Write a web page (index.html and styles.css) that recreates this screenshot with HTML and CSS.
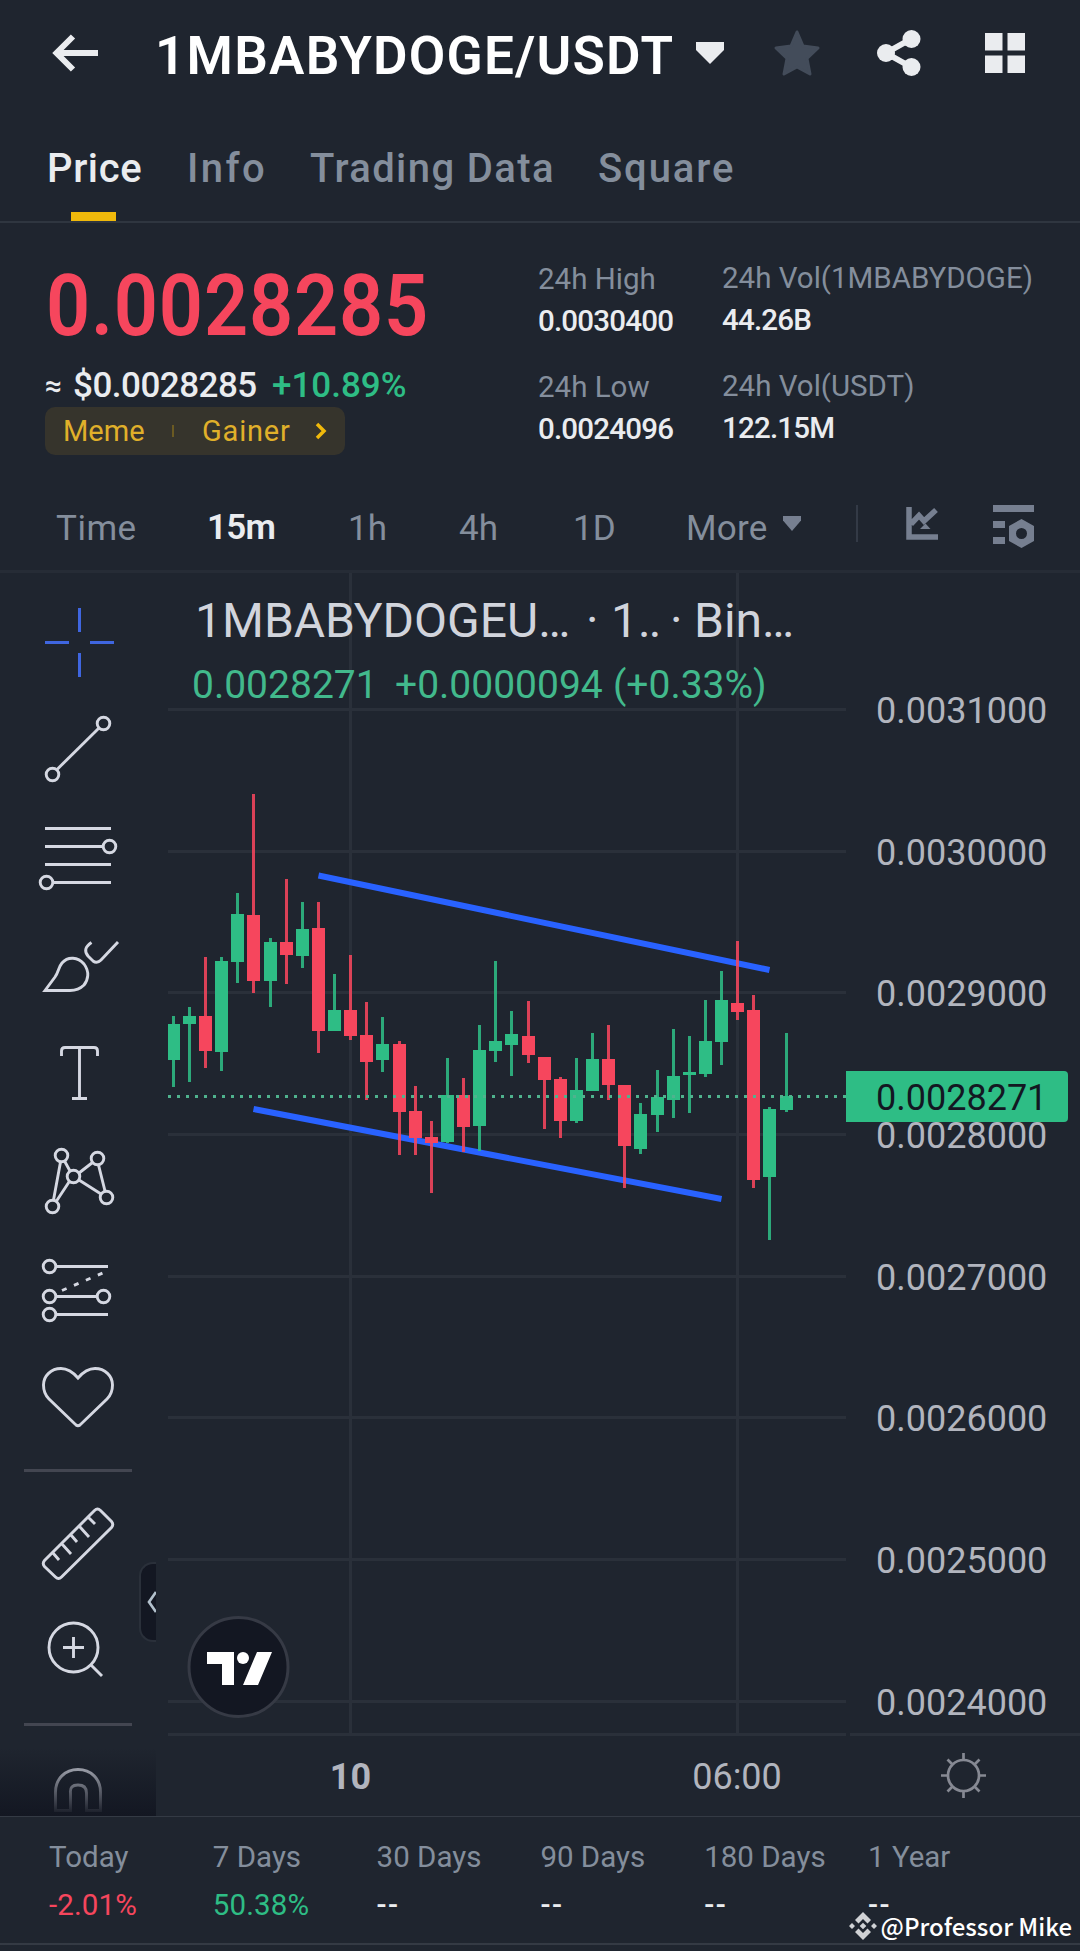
FILE: index.html
```
<!DOCTYPE html>
<html lang="en">
<head>
    <meta charset="utf-8">
    <title>1MBABYDOGE/USDT</title>
    <link rel="stylesheet" href="styles.css">
</head>
<body>
    <header class="header">
        <svg class="back" width="46" height="40" viewBox="0 0 46 40"><path d="M46 20H5M21 3.500L4.500 20L21 36.500" /></svg>
        <h1 class="pair">1MBABYDOGE/USDT</h1>
        <svg class="caret" width="28" height="22" viewBox="0 0 28 22"><path d="M0 0H28V8L14 22L0 8Z" /></svg>
        <svg class="star" width="48" height="48" viewBox="0 0 48 48"><path d="M24 3L30 17L45 19L34 29.500L37 45L24 38L11 45L14 29.500L3 19L18 17Z" /></svg>
        <svg class="share" width="44" height="46" viewBox="0 0 44 46"><path d="M34 9L9 23L34 37" /><circle cx="9" cy="23" r="9" /><circle cx="34.500" cy="9" r="9" /><circle cx="34.500" cy="37" r="9" /></svg>
        <svg class="apps" width="40" height="40" viewBox="0 0 40 40"><path d="M0 0H17.500V17.500H0ZM22.500 0H40V17.500H22.500ZM0 22.500H17.500V40H0ZM22.500 22.500H40V40H22.500Z" /></svg>
    </header>

    <nav class="tabs">
        <a class="tab active t-price">Price</a>
        <a class="tab t-info">Info</a>
        <a class="tab t-data">Trading Data</a>
        <a class="tab t-square">Square</a>
    </nav>

    <section class="ticker">
        <div class="quote">
            <div class="last">0.0028285</div>
            <div class="fiat"><span class="approx">≈</span><span class="usd">$0.0028285</span><span class="pct">+10.89%</span></div>
            <div class="tags">
                <span class="meme">Meme</span><i class="tag-line"></i><span class="gainer">Gainer</span>
                <svg width="12" height="18" viewBox="0 0 12 18"><path d="M2 2L9 9L2 16" /></svg>
            </div>
        </div>
        <dl class="stats left">
            <dt>24h High</dt><dd>0.0030400</dd>
            <dt>24h Low</dt><dd>0.0024096</dd>
        </dl>
        <dl class="stats right">
            <dt>24h Vol(1MBABYDOGE)</dt><dd>44.26B</dd>
            <dt>24h Vol(USDT)</dt><dd>122.15M</dd>
        </dl>
    </section>

    <nav class="intervals">
        <a class="i-time">Time</a>
        <a class="i-15m active">15m</a>
        <a class="i-1h">1h</a>
        <a class="i-4h">4h</a>
        <a class="i-1d">1D</a>
        <a class="i-more">More</a>
        <svg class="more-caret" width="18" height="15" viewBox="0 0 18 15"><path d="M0 0H18V4.500L9 15L0 4.500Z" /></svg>
        <i class="bar"></i>
        <svg class="indicator" width="32" height="33" viewBox="0 0 32 33"><path class="ln" d="M3 0V30H32M5 17L13 8.500L18 14L30 3" /><path d="M14 22L19.500 16.500L24.500 22Z" /></svg>
        <svg class="settings" width="41" height="43" viewBox="0 0 41 43"><path d="M0 0H41V7H0ZM0 16H12V23H0ZM0 32H12V39H0Z" /><path fill-rule="evenodd" d="M28.500 14L41 21V36L28.500 43L16 36V21ZM28.500 23A5.500 5.500 0 1 0 28.500 34A5.500 5.500 0 1 0 28.500 23Z" /></svg>
    </nav>

    <main class="chart">
        <aside class="toolbar">
            <!-- crosshair -->
            <svg class="tool blue" viewBox="0 0 156 108"><path d="M45 54.500H69M90 54.500H114M79.500 20V44M79.500 65V89" /></svg>
            <!-- trend line -->
            <svg class="tool" viewBox="0 0 156 108"><path d="M57 73.500L99 32" /><circle cx="103.500" cy="27.500" r="6.300" /><circle cx="52.500" cy="78.500" r="6.300" /></svg>
            <!-- fibonacci -->
            <svg class="tool" viewBox="0 0 156 108"><path d="M45 24.500H111M45 42.500H103M45 60.500H111M53 78.500H111" /><circle cx="109.500" cy="42.500" r="6.300" /><circle cx="46.500" cy="78.500" r="6.300" /></svg>
            <!-- brush -->
            <svg class="tool" viewBox="0 0 156 108"><path d="M45 78.500L55 65C59 59 58 56 62 51C68 44 78 45 84 52C90 60 88 68 84 73C80 77 75 78.500 70 78.500ZM91.500 30.500C85 35 84 39 88 44L93 49Q97 52 101 48L118 30" /></svg>
            <!-- text -->
            <svg class="tool" viewBox="0 0 156 108"><path d="M61.500 36V31Q61.500 27.500 65 27.500H94Q97.500 27.500 97.500 31V36M79.500 27.500V78.500M72 78.500H87" /></svg>
            <!-- pattern -->
            <svg class="tool" viewBox="0 0 156 108"><path d="M53.500 72L60.500 34M64.500 33L70 43M69 54L56.500 73M79 45L92.500 34.500M98.500 37L105 63M79 52L101 66" /><circle cx="61.500" cy="27.500" r="6.300" /><circle cx="97.500" cy="30.500" r="6.300" /><circle cx="73.500" cy="48.500" r="6.300" /><circle cx="106.500" cy="69.500" r="6.300" /><circle cx="52.500" cy="78.500" r="6.300" /></svg>
            <!-- forecast -->
            <svg class="tool" viewBox="0 0 156 108"><path d="M56 30.500H108M56 60.500H97M56 78.500H108" /><path d="M62 54.500L104 36.500" stroke-dasharray="5 8" /><circle cx="49.500" cy="30.500" r="6.300" /><circle cx="49.500" cy="60.500" r="6.300" /><circle cx="103.500" cy="60.500" r="6.300" /><circle cx="49.500" cy="78.500" r="6.300" /></svg>
            <!-- favourites -->
            <svg class="tool" viewBox="0 0 156 108"><path d="M78 34C84 27 89 24.500 95 24.500C105 24.500 112.500 32 112.500 41C112.500 47 111 51 107 55L80 81Q78 82.500 76 81L49 55C45 51 43.500 47 43.500 41C43.500 32 51 24.500 61 24.500C67 24.500 72 27 78 34Z" /></svg>
            <hr>
            <!-- ruler -->
            <svg class="tool" viewBox="0 0 156 108"><path d="M94.500 20.500Q97.500 17.500 100.500 20.500L111.500 31.500Q114 34.500 111.500 37.500L61.500 87Q58.500 90 55.500 87L44.500 76.500Q42 73.500 44.500 70.500ZM53 63L59 70M62 54L71 64M71 45L77 52M80 37L89 47M89 28L95 34" /></svg>
            <!-- zoom in -->
            <svg class="tool" viewBox="0 0 156 108"><circle cx="73.500" cy="49.500" r="24.500" /><path d="M63 49.500H84M73.500 39V60M91 67L102 78" /></svg>
            <hr>
            <!-- magnet -->
            <svg class="tool magnet" viewBox="0 0 156 76"><path d="M55.500 71.500V53C55.500 40 65 30.500 78 30.500S100.500 40 100.500 53V71.500H86.500V54Q86.500 46 78 46T70.500 54V71.500Z" /></svg>
            <div class="fade"></div>
            <div class="collapse"><svg width="9" height="22" viewBox="0 0 9 22"><path d="M9 1L2 11L9 21" /></svg></div>
        </aside>

        <div class="pane">
            <svg id="plot" width="912" height="1243" viewBox="168 573 912 1243">
                <g id="grid"></g>
                <path class="frame" d="M168 1734.500H846M850 1734.500H1080" />
                <path class="trend" d="M318.500 875.500L769.500 970M253.500 1109L721.500 1199" />
                <g id="candles"></g>
                <path class="price-line" d="M168 1096.500H846" />
                <g id="labels"></g>
                <path class="price-box" d="M846 1071H1064Q1068 1071 1068 1075V1118Q1068 1122 1064 1122H846Z" />
                <text class="axis now" x="876" y="1110">0.0028271</text>
                <text class="axis day" x="350.500" y="1789">10</text>
                <text class="axis hour" x="737" y="1789">06:00</text>
                <g class="sun"><circle cx="963.500" cy="1775.500" r="15.500" /><path d="M963.500 1753V1760M963.500 1791V1798M941 1775.500H948M979 1775.500H986M947.500 1759.500L952.500 1764.500M979.500 1759.500L974.500 1764.500M947.500 1791.500L952.500 1786.500M979.500 1791.500L974.500 1786.500" /></g>
                <circle class="tv" cx="238.500" cy="1667" r="49.500" />
                <path class="tv-mark" d="M207 1652H234V1685H222V1664H207ZM257 1652H272L258 1685H243Z" />
                <circle class="tv-mark" cx="243" cy="1658" r="6" />
            </svg>
            <div class="legend">
                <div class="symbol"><span class="s-name">1MBABYDOGEU…</span><span class="s-dot">·</span><span class="s-res">1<small>..</small></span><span class="s-dot2">·</span><span class="s-ex">Bin…</span></div>
                <div class="change"><span class="c-last">0.0028271</span><span class="c-abs">+0.0000094</span><span class="c-pct">(+0.33%)</span></div>
            </div>
        </div>
    </main>

    <footer class="periods">
        <div><span>Today</span><b class="down">-2.01%</b></div>
        <div><span>7 Days</span><b class="up">50.38%</b></div>
        <div><span>30 Days</span><b class="none">--</b></div>
        <div><span>90 Days</span><b class="none">--</b></div>
        <div><span>180 Days</span><b class="none">--</b></div>
        <div><span>1 Year</span><b class="none">--</b></div>
    </footer>

    <div class="author">
        <svg width="28" height="28" viewBox="0 0 28 28"><path d="M14 0L22 8L18.500 11.500L14 7L9.500 11.500L6 8ZM14 28L22 20L18.500 16.500L14 21L9.500 16.500L6 20ZM3 11L6 14L3 17L0 14ZM25 11L28 14L25 17L22 14ZM14 10.700L17.300 14L14 17.300L10.700 14Z" /></svg>
        <span>@Professor Mike</span>
    </div>

    <script src="script.js"></script>
</body>
</html>
```

FILE: styles.css
```
* { box-sizing: border-box; }
body { margin: 0; width: 1080px; height: 1951px; overflow: hidden; background: #1f252f; color: #eaecef; font-family: Roboto, "Liberation Sans", sans-serif; position: relative; }
svg { display: block; flex: none; }
span, a { white-space: nowrap; }

/* header */
.header { display: flex; align-items: center; height: 106px; padding-left: 52px; }
.header svg { fill: #eaecef; }
.header .back { fill: none; stroke: #eaecef; stroke-width: 6; }
.pair { width: 530px; margin: 5px 0 0 57px; font-size: 53px; line-height: 60px; font-weight: 600; color: #fff; letter-spacing: 1.25px; white-space: nowrap; }
.caret { margin-left: 11px; }
.header .star { margin-left: 49px; fill: #434c5a; stroke: #434c5a; stroke-width: 3; stroke-linejoin: round; }
.share { margin-left: 56px; }
.share path { fill: none; stroke: #eaecef; stroke-width: 6; }
.apps { margin-left: 64px; }

/* tabs */
.tabs { display: flex; height: 117px; padding-left: 47px; border-bottom: 2px solid #2f3640; }
.tab { display: block; position: relative; height: 115px; line-height: 125px; font-size: 40px; font-weight: 500; color: #848e9c; }
.tab.active { color: #eaecef; }
.tab.active::after { content: ""; position: absolute; left: 24px; bottom: 0; width: 45px; height: 9px; background: #f0b90b; }
.t-price { width: 140px; letter-spacing: 0.6px; }
.t-info { width: 123px; letter-spacing: 2.4px; }
.t-data { width: 288px; letter-spacing: 1.4px; }
.t-square { letter-spacing: 1.9px; }

/* ticker */
.ticker { display: flex; height: 253px; }
.quote { width: 538px; padding: 40px 0 0 46px; }
.last { height: 84px; line-height: 85px; font-size: 86px; font-weight: 600; color: #f6465d; letter-spacing: 0.9px; transform: scaleX(0.9); transform-origin: left; }
.fiat { display: flex; height: 60px; line-height: 77px; margin-left: -1px; font-size: 35px; font-weight: 500; }
.approx { width: 28px; font-size: 30px; }
.usd { width: 199px; letter-spacing: -0.5px; }
.pct { color: #2ebd85; }
.tags { display: flex; align-items: center; width: 300px; height: 48px; margin-left: -1px; border-radius: 10px; background: #36342c; color: #e0b02a; font-size: 29px; line-height: 50px; padding-left: 18px; }
.meme { width: 109px; }
.gainer { width: 113px; letter-spacing: 0.8px; }
.tag-line { width: 2px; height: 12px; background: #6b5a22; margin-right: 28px; }
.tags svg { fill: none; stroke: #f0b90b; stroke-width: 3.5; }
.stats { margin: 0; padding-top: 38px; font-size: 29.5px; }
.stats.left { width: 184px; padding-top: 39px; }
.stats dt { height: 35px; line-height: 35px; color: #848e9c; white-space: nowrap; }
.stats dd { height: 73px; line-height: 49px; margin: 0; font-weight: 500; letter-spacing: -0.8px; white-space: nowrap; }

/* interval row */
.intervals { display: flex; height: 97px; padding-left: 56px; border-bottom: 3px solid #262c36; font-size: 35px; line-height: 105px; color: #848e9c; }
.intervals .active { color: #eaecef; font-weight: 600; line-height: 103px; letter-spacing: -0.8px; }
.i-time { width: 151px; letter-spacing: 0.5px; }
.i-15m { width: 141px; }
.i-1h { width: 111px; }
.i-4h { width: 114px; }
.i-1d { width: 113px; }
.i-more { width: 97px; letter-spacing: 0.2px; }
.intervals svg { fill: #767f90; }
.more-caret { margin-top: 40px; }
.bar { width: 2px; height: 37px; margin: 29px 0 0 55px; background: #333a46; }
.indicator { margin: 31px 0 0 48px; }
.indicator .ln { fill: none; stroke: #767f90; stroke-width: 5.5; }
.settings { margin: 29px 0 0 55px; }

/* drawing tools */
.chart { display: flex; height: 1243px; }
.toolbar { position: relative; width: 168px; height: 1243px; padding-top: 15px; overflow: hidden; }
.tool { display: block; width: 156px; height: 108px; fill: none; stroke: #d5d8e2; stroke-width: 2.9; }
.tool.blue { stroke: #3f66e0; stroke-width: 3; }
.toolbar hr { width: 108px; height: 3px; margin: 17px 0 18px 24px; border: 0; background: #434651; }
.tool.magnet { height: 76px; margin-top: -5px; }
.fade { position: absolute; left: 0; bottom: 0; width: 156px; height: 68px; background: linear-gradient(rgba(19, 23, 34, 0), #131722); }
.collapse { position: absolute; left: 139px; top: 989px; width: 17px; height: 80px; padding: 27px 0 0 6px; border: 2px solid #2a303a; border-right: 0; border-radius: 14px 0 0 14px; background: #131722; }
.collapse path { fill: none; stroke: #b2c0cc; stroke-width: 2.7; }

/* price chart */
.pane { position: relative; width: 912px; }
.grid-line, .frame { fill: none; stroke: #2a303a; stroke-width: 3; }
.up-candle { fill: #2ebd85; }
.down-candle { fill: #f6465d; }
.wick { opacity: 0.87; }
.trend { fill: none; stroke: #2962ff; stroke-width: 6; }
.price-line { fill: none; stroke: #4fb38e; stroke-width: 3; stroke-dasharray: 3 6; }
.price-box { fill: #2ebd85; }
.axis { font-size: 36px; fill: #b2b5be; }
.axis.now { fill: #131722; }
.axis.day { font-weight: 700; text-anchor: middle; }
.axis.hour { text-anchor: middle; }
.sun { fill: none; stroke: #868993; stroke-width: 2.7; }
.tv { fill: #131722; stroke: #363a45; stroke-width: 3; }
.tv-mark { fill: #fff; }
.legend { position: absolute; left: 24px; top: 15px; }
.symbol { display: flex; height: 66px; line-height: 66px; font-size: 48px; color: #d1d4dc; }
.symbol small { font-size: 48px; letter-spacing: -2px; }
.change { display: flex; height: 62px; line-height: 62px; font-size: 39px; color: #42b98c; }
.s-name { width: 394px; padding-left: 3px; }
.s-dot { width: 25px; }
.s-res { width: 59px; }
.s-dot2 { width: 24px; }
.c-last { width: 203px; }
.c-abs { width: 218px; }

/* performance */
.periods { display: flex; height: 129px; padding: 31px 0 0 49px; border-top: 1px solid #343a44; border-bottom: 2px solid #343a44; font-size: 29.5px; }
.periods div { width: 163.8px; }
.periods span { display: block; height: 48px; line-height: 18px; color: #848e9c; }
.periods b { display: block; line-height: 18px; font-weight: 400; letter-spacing: 0.1px; }
.periods .none { font-weight: 500; letter-spacing: 1.5px; }
.up { color: #2ebd85; }
.down { color: #f6465d; }

/* watermark */
.author { position: absolute; right: 8px; bottom: 11px; display: flex; align-items: center; gap: 4px; font: 500 24px/28px "Noto Sans CJK SC", "Noto Sans", sans-serif; color: #fff; }
.author svg { fill: #d0d2d5; }
```

FILE: script.js
```
// left edge of body, wick top, body top, body bottom, wick bottom, direction (1 = up)
var candles = [
    [167, 1016, 1024, 1060, 1087, 1], [183, 1007, 1016, 1024, 1082, 1], [199, 957, 1016, 1051, 1068, 0],
    [215, 957, 961, 1052, 1071, 1], [231, 893, 914, 962, 983, 1], [247, 794, 915, 981, 993, 0],
    [264, 938, 942, 981, 1007, 1], [280, 879, 942, 955, 984, 0], [296, 902, 929, 956, 968, 1],
    [312, 902, 928, 1031, 1053, 0], [328, 974, 1010, 1031, 1031, 1], [344, 955, 1010, 1036, 1040, 0],
    [360, 1002, 1035, 1062, 1100, 0], [376, 1017, 1044, 1060, 1072, 1], [393, 1041, 1044, 1112, 1155, 0],
    [409, 1086, 1111, 1138, 1155, 0], [425, 1121, 1137, 1143, 1193, 0], [441, 1058, 1095, 1142, 1143, 1],
    [457, 1078, 1095, 1127, 1152, 0], [473, 1025, 1050, 1126, 1151, 1], [489, 961, 1041, 1051, 1062, 1],
    [505, 1011, 1034, 1045, 1076, 1], [522, 1001, 1036, 1055, 1063, 0], [538, 1057, 1057, 1080, 1129, 0],
    [554, 1077, 1079, 1121, 1138, 0], [570, 1058, 1090, 1121, 1123, 1], [586, 1033, 1059, 1091, 1091, 1],
    [602, 1025, 1059, 1085, 1100, 0], [618, 1085, 1085, 1146, 1188, 0], [634, 1103, 1114, 1149, 1154, 1],
    [651, 1070, 1097, 1115, 1132, 1], [667, 1029, 1076, 1100, 1118, 1], [683, 1036, 1072, 1075, 1113, 1],
    [699, 1000, 1041, 1074, 1077, 1], [715, 971, 1000, 1042, 1065, 1], [731, 941, 1003, 1012, 1020, 0],
    [747, 995, 1010, 1180, 1188, 0], [763, 1107, 1109, 1177, 1240, 1], [780, 1033, 1096, 1110, 1112, 1]
];

var NS = "http://www.w3.org/2000/svg";
function add(parent, tag, attrs) {
    var el = document.createElementNS(NS, tag);
    for (var k in attrs) el.setAttribute(k, attrs[k]);
    document.getElementById(parent).appendChild(el);
    return el;
}

// price levels from 0.0031000 down to 0.0024000
for (var i = 0; i < 8; i++) {
    var y = 709.5 + Math.round(i * 141.65);
    add("grid", "path", { "class": "grid-line", d: "M168 " + y + "H846" });
    add("labels", "text", { "class": "axis", x: 876, y: y + 13.5 }).textContent = "0.00" + (31 - i) + "000";
}
add("grid", "path", { "class": "grid-line", d: "M350.5 573V1733M737.5 573V1733" });

candles.forEach(function (c) {
    var cls = c[5] ? "up-candle" : "down-candle";
    add("candles", "rect", { "class": cls + " wick", x: c[0] + 5, y: c[1], width: 3, height: c[4] - c[1] });
    add("candles", "rect", { "class": cls, x: c[0], y: c[2], width: 13, height: c[3] - c[2] });
});
```
